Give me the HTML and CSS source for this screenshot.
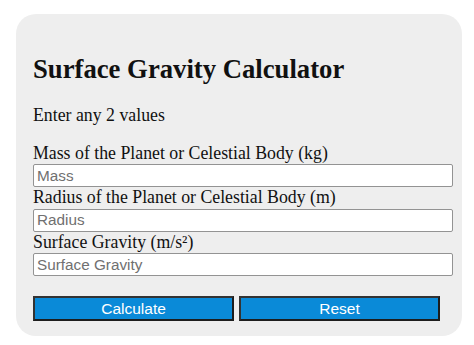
FILE: index.html
```html
<!DOCTYPE html>
<html>
<head>
<meta charset="utf-8">
<link rel="stylesheet" href="styles.css">
</head>
<body>
<div class="card">
  <h2 class="title">Surface Gravity Calculator</h2>
  <p class="hint">Enter any 2 values</p>
  <div class="field">
    <label class="label">Mass of the Planet or Celestial Body (kg)</label>
    <input class="input" type="text" placeholder="Mass">
  </div>
  <div class="field">
    <label class="label">Radius of the Planet or Celestial Body (m)</label>
    <input class="input" type="text" placeholder="Radius">
  </div>
  <div class="field">
    <label class="label">Surface Gravity (m/s²)</label>
    <input class="input" type="text" placeholder="Surface Gravity">
  </div>
  <div class="actions">
    <button class="btn" type="button">Calculate</button>
    <button class="btn" type="button">Reset</button>
  </div>
</div>
</body>
</html>
```

FILE: styles.css
```css
html, body {
  margin: 0;
  padding: 0;
  background: #ffffff;
}
body {
  font-family: "Liberation Serif", "Times New Roman", serif;
  font-size: 17.8px;
  color: #111;
}
.card {
  margin: 14px 0 0 16px;
  width: 446px;
  box-sizing: border-box;
  padding: 39px 9px 15px 17px;
  background: #eeeeee;
  border-radius: 20px;
}
.title {
  margin: 0 0 20px 0;
  font-size: 26.7px;
  font-weight: bold;
  line-height: 32px;
}
.hint {
  margin: 0 0 16px 0;
  line-height: 21.5px;
}
.field {
  display: flex;
  flex-direction: column;
}
.label {
  line-height: 21.5px;
}
.input {
  box-sizing: border-box;
  width: 420px;
  height: 23px;
  margin: 0;
  padding: 1px 3px;
  border: 1px solid #939393;
  border-radius: 2px;
  background: #fff;
  font-family: "Liberation Sans", Arial, sans-serif;
  font-size: 15.3px;
  color: #222;
}
.input::placeholder {
  color: #707070;
}
.actions {
  display: flex;
  gap: 5px;
  margin-top: 20px;
}
.btn {
  width: 201px;
  height: 25px;
  margin: 0;
  padding: 0;
  background: #0a8ad8;
  color: #fff;
  border: 2px solid #1d1d1d;
  border-top-color: #333;
  border-left-color: #333;
  font-family: "Liberation Sans", Arial, sans-serif;
  font-size: 15.5px;
}
```
